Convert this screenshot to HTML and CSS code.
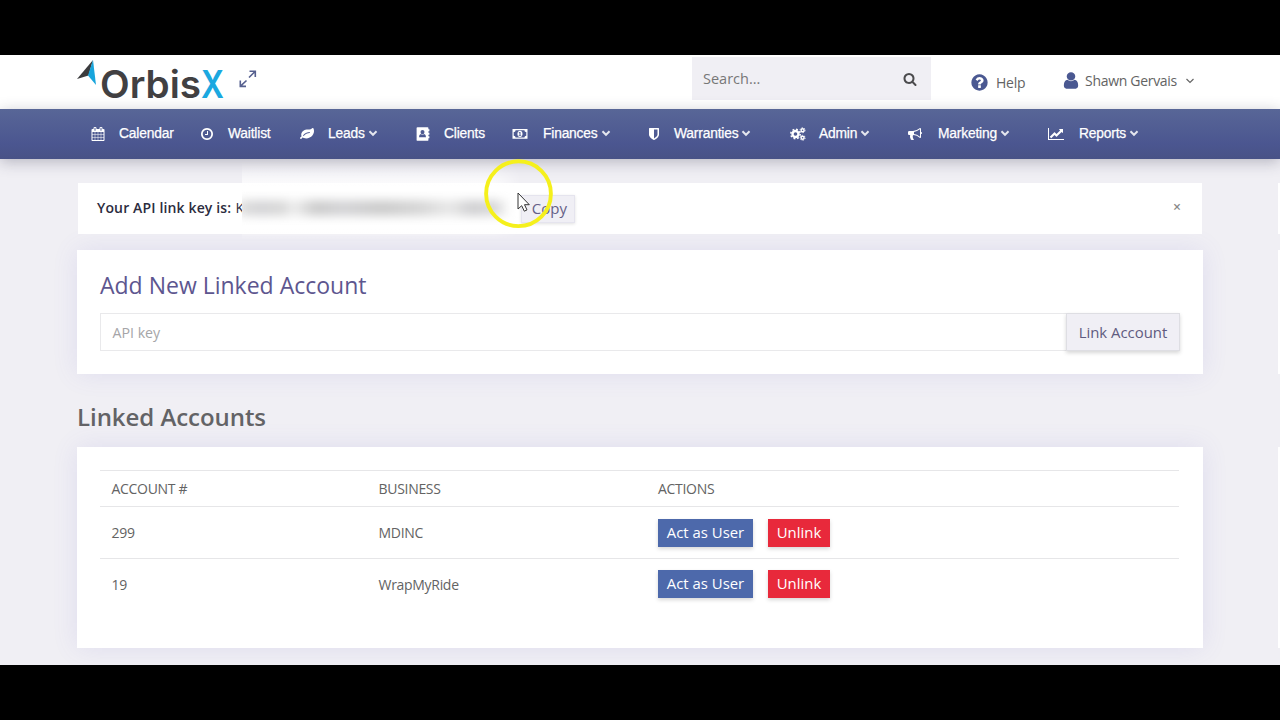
FILE: index.html
```html
<!DOCTYPE html>
<html lang="en">
<head>
<meta charset="utf-8">
<title>OrbisX - Linked Accounts</title>
<link rel="stylesheet" href="styles.css">
</head>
<body>
<div class="screen">
  <header class="topbar">
    <svg class="logo" width="148" height="48" viewBox="0 -4 148 48">
      <path d="M16 0 L0 19 L11.500 15.500Z" fill="#3b3b3d"/>
      <path d="M16 0 L11 15.500 L19 25Z" fill="#18a5dc"/>
      <text class="logo-text" x="23" y="38" textLength="101" lengthAdjust="spacingAndGlyphs" fill="#414042">Orbis</text>
      <text class="logo-text logo-x" x="124" y="38" textLength="23" lengthAdjust="spacingAndGlyphs" fill="#1ba8e0">X</text>
    </svg>
    <svg class="expand" width="18" height="18" viewBox="0 0 18 18" fill="none" stroke="#56608f" stroke-width="1.600"><path d="M10 7.500 16 1.500M10.500 1.300H16.300V7M7.500 10.500 1.500 16.200M1.300 10.500V16.400H7"/></svg>
    <div class="search"><span>Search...</span>
      <svg width="14" height="14" viewBox="0 0 1792 1792" fill="#4b4b4d"><path d="M1216 832q0-185-131.500-316.500t-316.500-131.500-316.500 131.500-131.500 316.500 131.500 316.500 316.500 131.500 316.500-131.500 131.500-316.500zm512 832q0 52-38 90t-90 38q-54 0-90-38l-343-342q-179 124-399 124-143 0-273.500-55.500t-225-150-150-225-55.500-273.500 55.500-273.500 150-225 225-150 273.500-55.500 273.500 55.500 225 150 150 225 55.500 273.500q0 220-124 399l343 343q37 37 37 90z"/></svg>
    </div>
    <div class="help">
      <svg width="19" height="19" viewBox="0 0 1792 1792" fill="#4a5891"><path d="M1024 1376v-192q0-14-9-23t-23-9h-192q-14 0-23 9t-9 23v192q0 14 9 23t23 9h192q14 0 23-9t9-23zm256-672q0-88-55.500-163t-138.500-116-170-41q-243 0-371 213-15 24 8 42l132 100q7 6 19 6 16 0 25-12 53-68 86-92 34-24 86-24 48 0 85.500 26t37.500 59q0 38-20 61t-68 45q-63 28-115.500 86.500t-52.500 125.500v36q0 14 9 23t23 9h192q14 0 23-9t9-23q0-19 21.500-49.500t54.500-49.500q32-18 49-28.500t46-35 44.500-48 28-60.500 12.500-81zm384 192q0 209-103 385.500t-279.500 279.500-385.500 103-385.500-103-279.500-279.500-103-385.500 103-385.500 279.500-279.500 385.500-103 385.500 103 279.500 279.500 103 385.500z"/></svg>
      <span>Help</span>
    </div>
    <div class="user">
      <svg width="20" height="19" viewBox="0 0 1792 1792" fill="#4a5891" preserveAspectRatio="none"><path d="M1536 1399q0 109-62.500 187t-150.500 78h-854q-88 0-150.500-78t-62.500-187q0-85 8.500-160.500t31.500-152 58.500-131 94-89 134.500-34.500q131 128 313 128t313-128q76 0 134.500 34.500t94 89 58.500 131 31.500 152 8.500 160.500zm-256-887q0 159-112.500 271.500t-271.500 112.500-271.500-112.500-112.500-271.500 112.500-271.500 271.500-112.500 271.500 112.500 112.500 271.500z"/></svg>
      <span>Shawn Gervais</span>
      <svg class="caret" width="8" height="6" viewBox="0 0 8 6" fill="none" stroke="#666" stroke-width="1.200"><path d="M.5 1 4 4.500 7.500 1"/></svg>
    </div>
  </header>

  <nav class="nav">
    <a class="item"><svg width="14" height="14" viewBox="0 0 1792 1792"><path d="M192 1664h288v-288h-288v288zm352 0h320v-288h-320v288zm-352-352h288v-320h-288v320zm352 0h320v-320h-320v320zm-352-384h288v-288h-288v288zm736 736h320v-288h-320v288zm-384-736h320v-288h-320v288zm768 736h288v-288h-288v288zm-384-352h320v-320h-320v320zm-352-864v-288q0-13-9.500-22.500t-22.500-9.500h-64q-13 0-22.500 9.500t-9.500 22.500v288q0 13 9.500 22.500t22.500 9.500h64q13 0 22.500-9.500t9.500-22.500zm736 864h288v-320h-288v320zm-384-384h320v-288h-320v288zm384 0h288v-288h-288v288zm32-480v-288q0-13-9.500-22.500t-22.500-9.500h-64q-13 0-22.500 9.500t-9.500 22.500v288q0 13 9.500 22.500t22.500 9.500h64q13 0 22.500-9.500t9.500-22.500zm384-64v1280q0 52-38 90t-90 38h-1408q-52 0-90-38t-38-90v-1280q0-52 38-90t90-38h128v-96q0-66 47-113t113-47h64q66 0 113 47t47 113v96h384v-96q0-66 47-113t113-47h64q66 0 113 47t47 113v96h128q52 0 90 38t38 90z"/></svg><span>Calendar</span></a>
    <a class="item"><svg width="14" height="14" viewBox="0 0 1792 1792"><path d="M1024 544v448q0 14-9 23t-23 9h-320q-14 0-23-9t-9-23v-64q0-14 9-23t23-9h224v-352q0-14 9-23t23-9h64q14 0 23 9t9 23zm416 352q0-148-73-273t-198-198-273-73-273 73-198 198-73 273 73 273 198 198 273 73 273-73 198-198 73-273zm224 0q0 209-103 385.500t-279.500 279.500-385.500 103-385.500-103-279.500-279.500-103-385.500 103-385.500 279.500-279.500 385.500-103 385.500 103 279.500 279.500 103 385.500z"/></svg><span>Waitlist</span></a>
    <a class="item"><svg width="14" height="14" viewBox="0 0 1792 1792"><path d="M1280 704q0-26-19-45t-45-19q-172 0-318 49.500t-259.500 134-235.500 219.500q-19 21-19 45 0 26 19 45t45 19q24 0 45-19 27-24 74-71t67-66q137-124 268.500-176t313.500-52q26 0 45-19t19-45zm512-198q0 95-20 193-46 224-184.500 383t-357.500 268q-214 108-438 108-148 0-286-47-15-5-88-42t-96-37q-16 0-39.500 32t-45 70-52.500 70-60 32q-43 0-63.500-17.500t-45.500-59.500q-2-4-6-11t-5.500-10-3-9.500-1.500-13.500q0-35 31-73.500t68-65.500 68-56 31-48q0-4-14-38t-16-44q-9-51-9-104 0-115 43.500-220t119-184.500 170.500-139 204-95.500q55-18 145-25.500t179.500-9 178.500-6 163.500-24 113.500-56.500l29.500-29.500 29.500-28 27-20 36.500-16 43.500-4.500q39 0 70.500 46t47.500 112 24 124 8 96z"/></svg><span>Leads</span><i class="chev"></i></a>
    <a class="item"><svg width="14" height="14" viewBox="0 0 14 14"><path fill-rule="evenodd" d="M1.500.2h10q.9 0 .9.900v1.200h1v2h-1v1.500h1v2h-1v1.500h1v2h-1v1.600q0 .9-.9.900h-10q-.9 0-.9-.9V1.100q0-.9.900-.9zM6.500 2.900a2 2.200 0 1 0 0 4.400 2 2.200 0 1 0 0-4.400zM4.800 7q-1.800.4-1.800 3.300h7q0-2.900-1.800-3.300-1.700 1.300-3.400 0z"/></svg><span>Clients</span></a>
    <a class="item"><svg class="money" width="16" height="12" viewBox="0 0 16 12"><path fill-rule="evenodd" d="M.5 1h15v9.800H.5zM3.600 2.200a2 2 0 0 1-1.900 1.900v3.600a2 2 0 0 1 1.900 1.900h8.800a2 2 0 0 1 1.900-1.900V4.100a2 2 0 0 1-1.900-1.900z"/><path fill-rule="evenodd" d="M8 2.700c3.400 0 3.400 6.400 0 6.400s-3.400-6.400 0-6.400zM7.600 4l-1 .7.400.6.500-.3v2h-.8v.8h2.500V7h-.7V4z"/></svg><span>Finances</span><i class="chev"></i></a>
    <a class="item"><svg class="shield" width="14" height="14" viewBox="0 0 1792 1792"><path d="M1344 960v-640h-448v1137q119-63 213-137 235-184 235-360zm192-768v768q0 86-33.500 170.500t-83 150-118 127.500-126.500 103-121 77.500-89.500 49.500-42.500 20q-12 6-26 6t-26-6q-16-7-42.500-20t-89.500-49.500-121-77.500-126.500-103-118-127.500-83-150-33.500-170.500v-768q0-26 19-45t45-19h1152q26 0 45 19t19 45z"/></svg><span>Warranties</span><i class="chev"></i></a>
    <a class="item"><svg width="16" height="14" viewBox="0 0 16 14" fill="none" stroke="#fff"><circle cx="5.500" cy="7" r="3" stroke-width="2.400" fill="none"/><circle cx="5.500" cy="7" r="4.700" stroke-width="1.500" stroke-dasharray="1.850 1.840" fill="none"/><circle cx="12.600" cy="3.200" r="1.500" stroke-width="1.400" fill="none"/><circle cx="12.600" cy="3.200" r="2.500" stroke-width=".9" stroke-dasharray="1.300 1.310" fill="none"/><circle cx="12.600" cy="10.800" r="1.500" stroke-width="1.400" fill="none"/><circle cx="12.600" cy="10.800" r="2.500" stroke-width=".9" stroke-dasharray="1.300 1.310" fill="none"/></svg><span>Admin</span><i class="chev"></i></a>
    <a class="item"><svg class="horn" width="14" height="14" viewBox="0 0 1792 1792"><path d="M1664 640q53 0 90.500 37.500t37.500 90.500-37.500 90.500-90.500 37.500v384q0 52-38 90t-90 38q-417-347-812-380-58 19-91 66t-31 100.500 40 92.500q-20 33-23 65.500t6 58 33.500 55 48 50 61.500 50.500q-29 58-111.500 83t-168.500 11.500-132-55.500q-7-23-29.500-87.500t-32-94.500-23-89-15-101 3.500-98.500 22-110.500h-122q-66 0-113-47t-47-113v-192q0-66 47-113t113-47h480q435 0 896-384 52 0 90 38t38 90v384zm-128 604v-954q-394 302-768 343v270q377 42 768 341z"/></svg><span>Marketing</span><i class="chev"></i></a>
    <a class="item"><svg class="chart" width="16" height="14" viewBox="0 0 2048 1792"><path d="M2048 1536v128h-2048v-1536h128v1408h1920zm-128-1248v435q0 21-19.500 29.500t-35.500-7.500l-121-121-633 633q-10 10-23 10t-23-10l-233-233-416 416-192-192 585-585q10-10 23-10t23 10l233 233 464-464-121-121q-16-16-7.500-35.500t29.500-19.500h435q14 0 23 9t9 23z"/></svg><span>Reports</span><i class="chev"></i></a>
  </nav>

  <main class="content">
    <section class="notice">
      <span class="notice-label">Your API link key is:</span><span class="key-start">K</span>
      <span class="copy-btn">Copy</span>
      <span class="close">×</span>
      <div class="blur-patch"><div class="smudge"></div></div>
    </section>

    <section class="card add-card">
      <h2>Add New Linked Account</h2>
      <div class="link-form"><div class="key-input">API key</div><div class="link-btn">Link Account</div></div>
    </section>

    <h1>Linked Accounts</h1>
    <section class="card list-card">
      <div class="row head"><span>ACCOUNT #</span><span>BUSINESS</span><span>ACTIONS</span></div>
      <div class="row"><span>299</span><span>MDINC</span><div class="actions"><span class="btn act">Act as User</span><span class="btn unlink">Unlink</span></div></div>
      <div class="row last"><span>19</span><span>WrapMyRide</span><div class="actions"><span class="btn act">Act as User</span><span class="btn unlink">Unlink</span></div></div>
    </section>
  </main>
  <div class="edge"></div>
  <svg class="pointer" width="72" height="72" viewBox="0 0 72 72"><circle cx="36.500" cy="35.700" r="32.400" fill="none" stroke="#f5f01c" stroke-width="3.900"/><path d="M36 35V51L39.700 47.700 42.300 53.200 45 51.900 42.500 46.700H47.300Z" fill="#fff" stroke="#333" stroke-width="1"/></svg>
</div>
</body>
</html>
```
FILE: styles.css
```css
* { box-sizing: border-box; }
body { margin: 0; padding: 55px 0; height: 720px; background: #000; overflow: hidden; font-family: "Open Sans", sans-serif; color: #636363; }
.screen { position: relative; height: 610px; background: #f0eff4; overflow: hidden; }
.topbar { height: 54px; background: #fff; display: flex; align-items: flex-start; padding-left: 77px; }
.logo { margin-top: 1px; overflow: visible; }
.logo-text { font-family: Inter, sans-serif; font-weight: 600; font-size: 38px; }
.expand { margin: 15px 0 0 14px; }
.search { width: 239px; height: 43px; margin: 2px 0 0 435px; background: #f0eff4; display: flex; align-items: center; justify-content: space-between; padding: 0 14px 0 11px; font-size: 14.500px; color: #777; }
.search span { margin-top: -1px; }
.help { display: flex; align-items: center; gap: 6px; margin: 17px 0 0 39px; height: 21px; width: 91px; font-size: 14px; letter-spacing: -.2px; }
.help span { margin-left: 1px; }
.user { display: flex; align-items: center; height: 21px; margin-top: 15px; font-size: 14px; letter-spacing: -.3px; white-space: nowrap; }
.user span { margin-left: 4px; }
.caret { margin-left: 9px; }
.nav { position: relative; z-index: 1; height: 50px; background: linear-gradient(#586697, #4b5690 70%, #485286); box-shadow: 0 3px 14px rgba(60,60,85,.32); padding: 0 0 1px 89px; display: grid; grid-template-columns: 109px 100px 116px 99px 131px 145px 119px 141px 120px; align-items: center; color: #fff; font-family: "Liberation Sans", Arial, sans-serif; font-size: 13.800px; letter-spacing: -.18px; }
.item { display: grid; grid-template-columns: 17px auto auto; justify-content: start; align-items: center; white-space: nowrap; -webkit-text-stroke: .25px #fff; }
.item svg { justify-self: center; fill: #fff; }
.item .money, .item .horn, .item .chart { margin-left: -3px; }
.item .shield { margin-left: 3px; }
.item span { margin-left: 13px; }
.chev { width: 6px; height: 6px; border: solid rgba(255,255,255,.85); border-width: 0 2px 2px 0; transform: rotate(45deg); margin: -3px 0 0 5px; }
.content { padding: 24px 77px 0; }
.notice { position: relative; height: 51px; margin: 0 1px; background: #fff; display: flex; align-items: center; padding: 0 21px 1px 19px; font-size: 14px; color: #2c2c3e; }
.notice-label { font-weight: 600; width: 138.500px; white-space: nowrap; letter-spacing: .14px; margin-top: -1px; }
.key-start { width: 285.500px; margin-top: -1px; }
.copy-btn { width: 54px; height: 28px; background: #f0eff5; border: 1px solid #e5e4ee; box-shadow: 0 1px 3px rgba(0,0,0,.12); font-size: 15px; line-height: 25px; color: #655f87; text-align: right; padding-right: 7px; margin-top: 1px; }
.close { margin: -3px 0 0 auto; font-size: 14px; font-weight: 600; color: #888; }
.blur-patch { position: absolute; left: 164px; top: -23px; width: 280px; height: 80px; background: linear-gradient(rgba(255,255,255,0), #fff 42%, #fff 70%, rgba(255,255,255,0)); -webkit-mask: linear-gradient(90deg, #000 90%, transparent); display: flex; align-items: center; overflow: hidden; }
.smudge { width: 274px; height: 16px; margin: 16px 0 0 -3px; filter: blur(5px); background: linear-gradient(90deg, #ddd 2%, #d5d5d7 7%, #d9d9d9 16%, #eee 20%, #ccc 28%, #d4d4d6 38%, #ccc 52%, #d6d6d6 66%, #e8e8e8 77%, #d0d0d2 85%, #ddd 96%, #fff); }
.card { background: #fff; box-shadow: 0 0 24px rgba(105,95,205,.12); }
.add-card { height: 124px; margin-top: 16px; padding: 21px 23px 0; }
h2 { margin: 0; font-size: 23px; line-height: 28px; font-weight: 400; color: #5d568f; }
.link-form { display: flex; margin-top: 14px; height: 38px; }
.key-input { flex: 1; border: 1px solid #e9e9eb; border-right: 0; padding-left: 11.500px; font-size: 14.200px; line-height: 37px; color: #a5a5a8; }
.link-btn { width: 114px; background: #f0eff5; border: 1px solid #dedee3; box-shadow: 0 2px 4px rgba(0,0,0,.16); font-size: 14.900px; line-height: 36px; text-align: center; color: #5f5b80; white-space: nowrap; }
h1 { margin: 26px 0 13px; font-size: 24px; line-height: 34px; font-weight: 600; color: #636366; letter-spacing: -.05px; }
.list-card { height: 201px; padding: 23px 24px 0 23px; font-size: 14px; letter-spacing: -.3px; }
.row { display: grid; grid-template-columns: 267px 279.500px 1fr; height: 52px; align-items: center; padding-left: 11.500px; border-top: 1px solid #e6e6e8; }
.row.head { height: 36px; }
.row.last { padding-bottom: 1px; }
.actions { display: flex; gap: 15px; }
.btn { height: 28px; line-height: 27px; font-size: 14.900px; letter-spacing: 0; color: #fff; text-align: center; box-shadow: 0 2px 4px rgba(0,0,0,.16); white-space: nowrap; }
.act { width: 95px; background: #4d69ab; }
.unlink { width: 62px; background: #e8293b; }
.edge { position: absolute; right: 0; top: 128px; width: 2px; height: 465px; background: linear-gradient(#fff 51px, transparent 51px 67px, #fff 67px 191px, transparent 191px 264px, #fff 264px); }
.pointer { position: absolute; z-index: 3; left: 482px; top: 103px; }
```
